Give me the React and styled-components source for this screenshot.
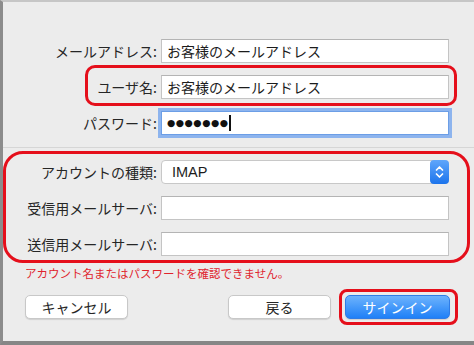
import React from "react";
import styled, { createGlobalStyle } from "styled-components";

const Global = createGlobalStyle`
  html, body { margin: 0; padding: 0; background: #ececec; }
  * { box-sizing: border-box; }
`;

const RED = "#e50f1b";
const JP = `"Noto Sans CJK JP", "Noto Sans", sans-serif`;

const Window = styled.div`
  width: 474px;
  height: 345px;
  background: #ececec;
  border-left: 3px solid #8c8c8c;
  border-top: 2px solid #c6c6c6;
  border-bottom: 4px solid #868686;
  padding-top: 37px;
  display: flex;
  flex-direction: column;
  font-family: ${JP};
  color: #262626;
`;

const Row = styled.div`
  display: grid;
  grid-template-columns: 1fr 288px;
  column-gap: 4px;
  align-items: center;
  height: 24px;
  padding-right: ${(p) => p.$pr || 0}px;
`;

const Label = styled.label`
  text-align: right;
  font-size: 14px;
  line-height: 24px;
  white-space: nowrap;
`;

const Field = styled.div`
  height: 24px;
  background: #fff;
  border: 1px solid #c4c4c4;
  border-top-color: #b4b4b4;
  font-size: 14px;
  line-height: 22px;
  padding-left: 5px;
  color: #1c1c1c;
  white-space: nowrap;
  overflow: hidden;
  display: flex;
  align-items: center;
  ${(p) =>
    p.$focused &&
    `
    border-color: #6c9ee6;
    box-shadow: 0 0 0 3px #8db4ee;
  `}
`;

const Dots = styled.span`
  font-family: "DejaVu Sans", sans-serif;
  font-size: 9.5px;
  line-height: 22px;
  letter-spacing: 0.5px;
  color: #111;
`;

const Caret = styled.span`
  display: inline-block;
  width: 2px;
  height: 16px;
  background: #111;
  margin-left: 0;
`;

const NameHighlight = styled.div`
  margin: 2px 17px 5px 82px;
  border: 3px solid ${RED};
  border-radius: 10px;
  padding: 7px 5px 4px 0;
`;

const Separator = styled.div`
  margin-top: 12px;
  height: 1px;
  background: #d6d6d6;
`;

const Group = styled.div`
  margin: 3px 4px 0 0;
  border: 3px solid ${RED};
  border-radius: 20px;
  padding: 6px 18px 4px 0;
  display: flex;
  flex-direction: column;
  gap: 12px;
`;

const Select = styled.div`
  height: 24px;
  background: #fff;
  border: 1px solid #c8c8c8;
  border-radius: 4px;
  display: flex;
  align-items: center;
  justify-content: space-between;
  padding-left: 10px;
  font-family: "Liberation Sans", ${JP};
  font-size: 14.5px;
  color: #1c1c1c;
`;

const Stepper = styled.span`
  width: 19px;
  height: 24px;
  margin: -1px -1px -1px 0;
  border-radius: 4px;
  background: linear-gradient(#5fa6fb, #1c74ec);
  display: flex;
  align-items: center;
  justify-content: center;
`;

const ErrorText = styled.p`
  margin: 2px 0 0;
  padding-left: 22px;
  font-size: 11.5px;
  line-height: 16px;
  color: #e0242c;
`;

const Buttons = styled.div`
  margin-top: 8px;
  display: flex;
  align-items: center;
  padding: 0 16px 0 22px;
`;

const Button = styled.button`
  width: ${(p) => p.$w || 103}px;
  height: 24px;
  border-radius: 5px;
  font-family: ${JP};
  font-size: 14px;
  line-height: 22px;
  padding: 0;
  cursor: pointer;
  background: ${(p) => (p.$primary ? "linear-gradient(#6db3fd, #1f80f7)" : "#fff")};
  border: 1px solid ${(p) => (p.$primary ? "#2f7ce6" : "#c8c8c8")};
  color: ${(p) => (p.$primary ? "#fff" : "#262626")};
  box-shadow: 0 1px 1px rgba(0, 0, 0, 0.12);
  margin-left: ${(p) => (p.$push ? "auto" : "0")};
`;

const ButtonHighlight = styled.div`
  margin-left: 8px;
  border: 3px solid ${RED};
  border-radius: 8px;
  padding: 3px 5px 3px 3px;
  display: flex;
`;

const Chevrons = () => (
  <svg width="11" height="16" viewBox="0 0 11 16" fill="none">
    <path d="M2.5 6 L5.5 3 L8.5 6" stroke="#fff" strokeWidth="1.7" strokeLinecap="round" strokeLinejoin="round" />
    <path d="M2.5 10 L5.5 13 L8.5 10" stroke="#fff" strokeWidth="1.7" strokeLinecap="round" strokeLinejoin="round" />
  </svg>
);

export default function App() {
  return (
    <>
      <Global />
      <Window>
        <Row $pr={25}>
          <Label>メールアドレス:</Label>
          <Field>お客様のメールアドレス</Field>
        </Row>
        <NameHighlight>
          <Row>
            <Label>ユーザ名:</Label>
            <Field>お客様のメールアドレス</Field>
          </Row>
        </NameHighlight>
        <Row $pr={25}>
          <Label>パスワード:</Label>
          <Field $focused>
            <Dots>●●●●●●●</Dots>
            <Caret />
          </Field>
        </Row>
        <Separator />
        <Group>
          <Row>
            <Label>アカウントの種類:</Label>
            <Select>
              IMAP
              <Stepper>
                <Chevrons />
              </Stepper>
            </Select>
          </Row>
          <Row>
            <Label>受信用メールサーバ:</Label>
            <Field />
          </Row>
          <Row>
            <Label>送信用メールサーバ:</Label>
            <Field />
          </Row>
        </Group>
        <ErrorText>アカウント名またはパスワードを確認できません。</ErrorText>
        <Buttons>
          <Button>キャンセル</Button>
          <Button $push>戻る</Button>
          <ButtonHighlight>
            <Button $primary $w={105}>サインイン</Button>
          </ButtonHighlight>
        </Buttons>
      </Window>
    </>
  );
}
